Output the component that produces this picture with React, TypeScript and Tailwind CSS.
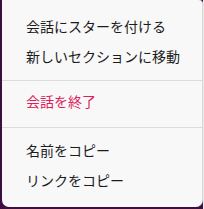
import React from "react";

const Item = ({ label, danger }: { label: string; danger?: boolean }) => (
  <div
    className={`h-[30px] flex items-center pl-[24px] text-[14px] leading-none ${
      danger ? "text-[#e01e5a]" : "text-[#1d1c1d]"
    }`}
  >
    {label}
  </div>
);

export default function App() {
  return (
    <div
      className="w-[204px] h-[209px] bg-[#3f0e40] flex overflow-hidden"
      style={{ fontFamily: '"Noto Sans CJK JP", "Noto Sans", sans-serif' }}
    >
      <div className="ml-[2px] w-[201px] h-[207px] bg-[#f8f8f8] border-r border-[#d6d6d6] rounded-tr-[4px] rounded-b-[7px] flex flex-col pt-[11px]">
        <Item label="会話にスターを付ける" />
        <Item label="新しいセクションに移動" />
        <div className="h-px bg-[#dcdcdc] mt-[9px] mb-[5px]" />
        <Item label="会話を終了" danger />
        <div className="h-px bg-[#dcdcdc] mt-[11px] mb-[7px]" />
        <Item label="名前をコピー" />
        <Item label="リンクをコピー" />
      </div>
      <div className="w-[1px] h-full bg-[#ececec]" />
    </div>
  );
}
